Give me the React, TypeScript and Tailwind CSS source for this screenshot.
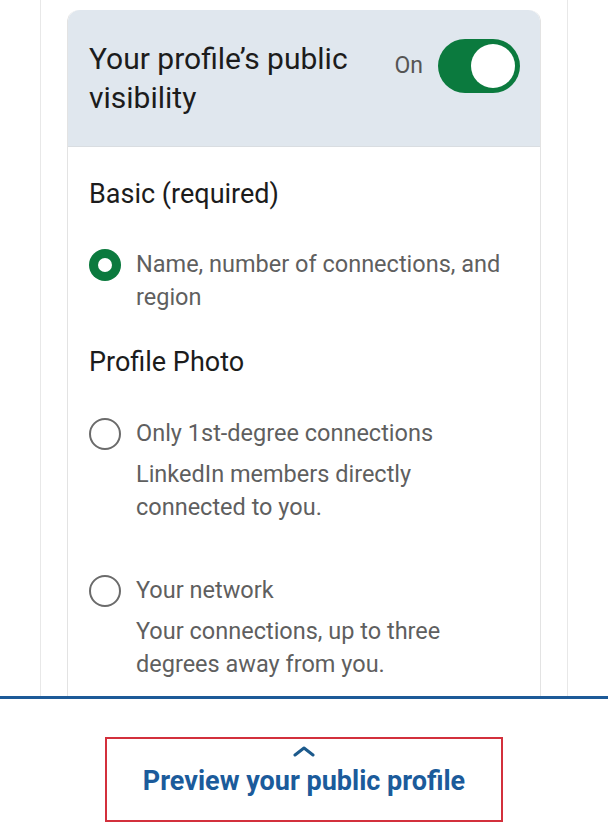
import React from "react";

type Option = {
  title: string;
  desc?: string[];
  checked?: boolean;
};

function Radio({ checked }: { checked?: boolean }) {
  if (checked) {
    return (
      <span className="flex h-[32px] w-[32px] shrink-0 items-center justify-center rounded-full bg-[#0b7a3e]">
        <span className="h-[14px] w-[14px] rounded-full bg-white" />
      </span>
    );
  }
  return <span className="h-[32px] w-[32px] shrink-0 rounded-full border-2 border-[#6b6b6b]" />;
}

function OptionRow({ opt }: { opt: Option }) {
  return (
    <div className="flex items-start gap-[15px]">
      <div className="flex h-[33px] items-center">
        <Radio checked={opt.checked} />
      </div>
      <div className="text-[23.5px] leading-[33px] text-[#5f5f5f]">
        {opt.title.split("\n").map((l) => (
          <div key={l}>{l}</div>
        ))}
        {opt.desc && (
          <div className="mt-[8px]">
            {opt.desc.map((l) => (
              <div key={l}>{l}</div>
            ))}
          </div>
        )}
      </div>
    </div>
  );
}

export default function App() {
  return (
    <div
      className="flex h-[840px] w-[608px] flex-col overflow-hidden bg-white"
      style={{ fontFamily: "Roboto, 'Noto Sans', sans-serif" }}
    >
      {/* Scrolling settings area */}
      <div className="h-[696px] shrink-0 overflow-hidden px-[40px]">
        <div className="h-full border-x border-[#e8e8e8] px-[26px] pt-[10px]">
          <div className="h-full rounded-t-[12px] border-x border-[#e3e3e3]">
            {/* Header */}
            <div className="flex h-[137px] items-start justify-between rounded-t-[12px] border-b border-[#d9dde1] bg-[#e0e7ee] pl-[21px] pr-[20px] pt-[29px]">
              <h1 className="text-[30px] leading-[39px] text-[#1c1c1c]">
                Your profile’s public
                <br />
                visibility
              </h1>
              <div className="flex items-center gap-[15px]">
                <span className="text-[23px] text-[#555]">On</span>
                <div className="flex h-[54px] w-[82px] items-center justify-end rounded-full bg-[#0b7a3e] pr-[5px]">
                  <span className="h-[44px] w-[44px] rounded-full bg-white" />
                </div>
              </div>
            </div>

            {/* Body */}
            <div className="px-[21px] pt-[30px]">
              <h2 className="text-[27px] leading-[35px] text-[#1c1c1c]">Basic (required)</h2>
              <div className="mt-[36px]">
                <OptionRow opt={{ title: "Name, number of connections, and\nregion", checked: true }} />
              </div>
              <h2 className="mt-[31px] text-[27px] leading-[35px] text-[#1c1c1c]">Profile Photo</h2>
              <div className="mt-[37px] flex flex-col gap-[50px]">
                <OptionRow
                  opt={{
                    title: "Only 1st-degree connections",
                    desc: ["LinkedIn members directly", "connected to you."],
                  }}
                />
                <OptionRow
                  opt={{
                    title: "Your network",
                    desc: ["Your connections, up to three", "degrees away from you."],
                  }}
                />
              </div>
            </div>
          </div>
        </div>
      </div>

      <div className="h-[3px] shrink-0 bg-[#1d5a98]" />

      {/* Preview button */}
      <div className="flex flex-1 justify-center pt-[38px]">
        <button className="flex h-[85px] w-[398px] flex-col items-center border-2 border-[#d3303c] pt-[6px]">
          <svg width="24" height="12" viewBox="0 0 24 12" fill="none">
            <polyline points="3,10 12,3 21,10" stroke="#1c5a8c" strokeWidth="3" strokeLinecap="round" strokeLinejoin="round" />
          </svg>
          <span className="mt-[8px] text-[27px] font-bold leading-[32px] text-[#1b5b9b]">
            Preview your public profile
          </span>
        </button>
      </div>
    </div>
  );
}
